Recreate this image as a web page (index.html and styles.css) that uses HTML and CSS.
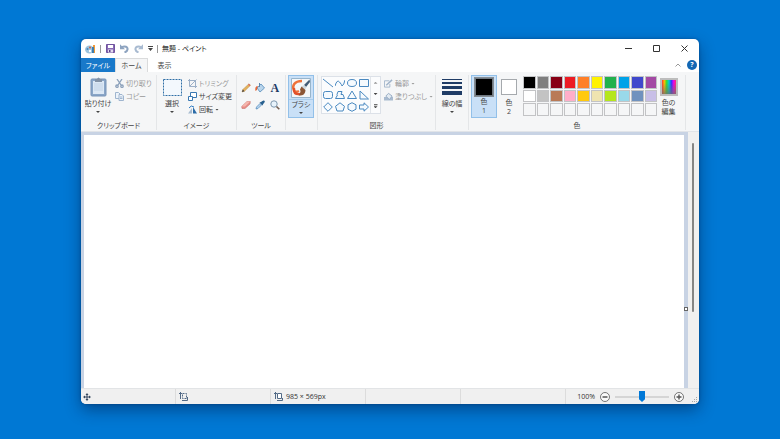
FILE: index.html
```html
<!DOCTYPE html>
<html lang="ja">
<head>
<meta charset="utf-8">
<title>無題 - ペイント</title>
<link rel="stylesheet" href="styles.css">
</head>
<body>
<main class="window">
  <header class="titlebar">
    <svg class="app-icon" width="11" height="10" viewBox="0 0 11 10"><ellipse cx="4.500" cy="5.500" rx="4.500" ry="4" fill="#9cc3de"/><circle cx="2.500" cy="5" r="1" fill="#4a86b8"/><circle cx="5" cy="3.500" r="1" fill="#d8613c"/><circle cx="5" cy="7" r="1.200" fill="#fff"/><path d="M8 1h2v8H8z" fill="#f29a38"/><path d="M7 3h2v6H7z" fill="#3f7dad"/></svg>
    <i class="bar"></i>
    <button class="tool" aria-label="上書き保存"><svg width="9" height="9" viewBox="0 0 9 9"><path d="M.5.500h8v8h-8z" fill="#8a6bb5" stroke="#70539f"/><path d="M2 1h5v3H2z" fill="#fff"/><path d="M2 5.500h5v3H2z" fill="#e3dbef"/><path d="M3 6h1.500v2H3z" fill="#5d438a"/></svg></button>
    <button class="tool" aria-label="元に戻す"><svg width="9" height="9" viewBox="0 0 9 9" fill="none" stroke="#8ea4c0" stroke-width="2"><path d="M1.500 3.300C5 1.500 8 3 7.500 5.500 7.200 7 6 8 4.500 8.500"/><path d="M0 .3v5h5z" fill="#8ea4c0" stroke="none"/></svg></button>
    <button class="tool" aria-label="やり直し"><svg width="9" height="9" viewBox="0 0 9 9" fill="none" stroke="#a9bbd1" stroke-width="2"><path d="M7.500 3.300C4 1.500 1 3 1.500 5.500 1.800 7 3 8 4.500 8.500"/><path d="M9 .3v5H4z" fill="#a9bbd1" stroke="none"/></svg></button>
    <button class="tool narrow" aria-label="カスタマイズ"><svg width="5" height="5" viewBox="0 0 5 5"><path d="M0 0h5v1H0zM0 2h5L2.500 5z" fill="#444"/></svg></button>
    <i class="bar"></i>
    <h1>無題 - ペイント</h1>
    <div class="caption">
      <button aria-label="最小化"><svg width="7" height="7" viewBox="0 0 7 7"><path d="M0 3.500h7" stroke="#333"/></svg></button>
      <button aria-label="最大化"><svg width="7" height="7" viewBox="0 0 7 7"><path d="M.5.500h6v6h-6z" fill="none" stroke="#333"/></svg></button>
      <button aria-label="閉じる"><svg width="7" height="7" viewBox="0 0 7 7"><path d="M.5.500l6 6M6.500.500l-6 6" stroke="#333"/></svg></button>
    </div>
  </header>

  <nav class="tabs">
    <button class="tab file">ファイル</button>
    <button class="tab active">ホーム</button>
    <button class="tab">表示</button>
    <button class="collapse" aria-label="リボンを折りたたむ"><svg width="6" height="4" viewBox="0 0 6 4"><path d="M.5 3.500L3 1l2.500 2.500" fill="none" stroke="#999"/></svg></button>
    <button class="help" aria-label="ヘルプ">?</button>
  </nav>

  <section class="ribbon">
    <section class="group clipboard">
      <div class="content">
        <button class="big"><span class="pic"><svg width="17" height="20" viewBox="0 0 17 20"><rect x="1" y="2" width="15" height="17" rx="1" fill="#8aa6c8" stroke="#7894b8"/><path d="M3 4h11v13H3z" fill="#dce8f5"/><path d="M4 7h9M4 9h9M4 11h9M4 13h9" stroke="#c2d3e7"/><path d="M5 2h2q1.500-3 3 0h2v3H5z" fill="#8392a6"/></svg></span><span>貼り付け</span><i class="arrow"></i></button>
        <div class="stack">
          <button class="item off"><svg width="9" height="9" viewBox="0 0 9 9" fill="none" stroke="#8ba0ba" stroke-width="1.300"><path d="M2 0l4 6M7 0L3 6"/><circle cx="2" cy="7.200" r="1.200"/><circle cx="7" cy="7.200" r="1.200"/></svg>切り取り</button>
          <button class="item off"><svg width="9" height="9" viewBox="0 0 9 9" fill="#edf3fa" stroke="#9fb5cf"><path d="M.5.500h3l1.500 1.500v4.500H.5z"/><path d="M4 2.500h3L8.500 4v4.500H4zM5 5h2.500M5 6.500h2.500"/></svg>コピー</button>
        </div>
      </div>
      <h2>クリップボード</h2>
    </section>

    <section class="group image">
      <div class="content">
        <button class="big select"><span class="pic"><svg width="19" height="17" viewBox="0 0 19 17"><path d="M.5.500h18v16H.5z" fill="#f3f8fd" stroke="#2f6ea6" stroke-dasharray="2 1"/></svg></span><span>選択</span><i class="arrow"></i></button>
        <div class="stack">
          <button class="item off"><svg width="9" height="9" viewBox="0 0 9 9" fill="none" stroke="#9cb0c8"><path d="M1.500 0v7.500H9M0 1.500h7.500V9M2 7L8.500.500"/></svg>トリミング</button>
          <button class="item"><svg width="9" height="9" viewBox="0 0 9 9" fill="#fff" stroke="#3978b2"><path d="M2.500.500h6v5h-6z"/><path d="M.5 4.500h4v4h-4z"/></svg>サイズ変更</button>
          <button class="item"><svg width="9" height="9" viewBox="0 0 9 9"><path d="M4 8.500H0L4 3z" fill="#a9bdd1"/><path d="M5 2l4 6.500H5z" fill="#2b6ca8"/><path d="M1 3q2-3.500 5-1" fill="none" stroke="#2b78c2"/></svg>回転<i class="arrow"></i></button>
        </div>
      </div>
      <h2>イメージ</h2>
    </section>

    <section class="group tools">
      <div class="content">
        <div class="tool-grid">
          <button aria-label="鉛筆"><svg width="10" height="10" viewBox="0 0 10 10"><path d="M1 9l.8-2.500L8 .8 9.500 2.300 3.500 8.200z" fill="#e5b25c" stroke="#b98f50" stroke-width=".5"/><path d="M1 9l.8-2.500 1.700 1.700z" fill="#444"/><path d="M7 1.600L8 .7l1.500 1.500-1 1z" fill="#d97163"/></svg></button>
          <button aria-label="塗りつぶし"><svg width="10" height="10" viewBox="0 0 10 10"><path d="M2 5L6 1l3.500 4L5 9z" fill="#b9d5ec" stroke="#6d9cc4"/><path d="M3 3Q-.5 3 .5 8q2-1 2-4z" fill="#e76737"/><path d="M4.500 0v4" stroke="#5d88ad"/></svg></button>
          <button class="letter" aria-label="テキスト">A</button>
          <button aria-label="消しゴム"><svg width="10" height="10" viewBox="0 0 10 10"><path d="M.7 6.500L6 1.500h3.300L9 4 4 8.500H1z" fill="#e88c87" stroke="#c9756f" stroke-width=".6"/><path d="M.7 6.500L6 1.500h3.300L4 6.500z" fill="#f5b6ad"/></svg></button>
          <button aria-label="色の選択"><svg width="10" height="10" viewBox="0 0 10 10"><path d="M1 9l.5-2L5 3.500l1.500 1.500L3 8.500z" fill="#b6d4ee" stroke="#4d86ba" stroke-width=".7"/><path d="M4.500 2.500l3 3 .7-1.500Q11 1.500 9 .5 8 0 6 2z" fill="#28608f"/></svg></button>
          <button aria-label="拡大鏡"><svg width="10" height="10" viewBox="0 0 10 10"><circle cx="4" cy="4" r="3.200" fill="#e8f3fb" stroke="#7e98ad"/><path d="M6.500 6.500L9.300 9.300" stroke="#735e51" stroke-width="1.600"/></svg></button>
        </div>
      </div>
      <h2>ツール</h2>
    </section>

    <section class="group brush">
      <button class="big chosen"><span class="pic"><svg width="20" height="20" viewBox="0 0 20 20"><path d="M.5.500h19v19H.5z" fill="#f4f7f9" stroke="#98b5cc"/><path d="M11 3C3 3 1 8 3 12q1 3 5 1" fill="none" stroke="#ee713a" stroke-width="2.500"/><path d="M3 10q-1 7 6 6 3-.5 4-3" fill="none" stroke="#e2502a" stroke-width="2.500"/><path d="M18.500 1.500L13 7l2 2 4-5z" fill="#425c76"/><path d="M13 7l2.500 2.500-1.500 2-3.500-3z" fill="#cfd8df"/><path d="M10.500 8.500l4 3.500q0 6-7 5.500 3-3 1.500-6z" fill="#8b5636"/></svg></span><span class="split">ブラシ</span><i class="arrow"></i></button>
    </section>

    <section class="group shapes">
      <div class="content">
        <div class="gallery">
          <div class="shape-grid">
            <svg viewBox="0 0 10 10"><path d="M0 1l10 8"/></svg>
            <svg viewBox="0 0 10 10"><path d="M0 8Q2 1 4.500 4T7 8Q9 7 10 2"/></svg>
            <svg viewBox="0 0 10 10"><ellipse cx="5" cy="5" rx="4.500" ry="3.500"/></svg>
            <svg viewBox="0 0 10 10"><path d="M.5 1.500h9v7h-9z"/></svg>
            <svg viewBox="0 0 10 10"><rect x=".5" y="1.500" width="9" height="7" rx="2"/></svg>
            <svg viewBox="0 0 10 10"><path d="M.5 8.500l2-3.500-.5-.5 1-3h4L6 4.500h2l1.500 4z"/></svg>
            <svg viewBox="0 0 10 10"><path d="M5 1l4.500 7.500h-9z"/></svg>
            <svg viewBox="0 0 10 10"><path d="M1 1v8h8.500z"/></svg>
            <svg viewBox="0 0 10 10"><path d="M5 .7L9.300 5 5 9.300.7 5z"/></svg>
            <svg viewBox="0 0 10 10"><path d="M5 .8l4.500 3.500L8 9H2L.5 4.300z"/></svg>
            <svg viewBox="0 0 10 10"><path d="M5 .7l4 2.100v4.400L5 9.300 1 7.200V2.800z"/></svg>
            <svg viewBox="0 0 10 10"><path d="M.5 3H5V.8L9.500 5 5 9.200V7H.5z"/></svg>
          </div>
          <div class="gallery-scroll">
            <button class="off" aria-label="上へ"><i class="arrow up"></i></button>
            <button aria-label="下へ"><i class="arrow"></i></button>
            <button aria-label="その他"><i class="arrow lined"></i></button>
          </div>
        </div>
        <div class="stack">
          <button class="item off"><svg width="9" height="9" viewBox="0 0 10 9" fill="none" stroke="#9fb3ca"><path d="M6 1.500H.5v7h6V5"/><path d="M2.500 6.500L9 .5" stroke-width="1.600"/></svg>輪郭<i class="arrow"></i></button>
          <button class="item off"><svg width="9" height="9" viewBox="0 0 10 9"><path d="M0 5h10v4H0z" fill="#a9bbd0"/><path d="M2 4l3-3 4 3-3 4z" fill="#e2eaf2" stroke="#90a6bf"/></svg>塗りつぶし<i class="arrow"></i></button>
        </div>
      </div>
      <h2>図形</h2>
    </section>

    <section class="group width">
      <button class="big"><span class="pic"><svg width="20" height="18" viewBox="0 0 20 18" fill="#1f3c66"><path d="M0 1h20v1H0zM0 4h20v2H0zM0 8h20v3H0zM0 13h20v4H0z"/></svg></span><span>線の幅</span><i class="arrow"></i></button>
    </section>

    <section class="group colors">
      <div class="content">
        <button class="big chosen"><span class="pic"><i class="swatch black"></i></span><span>色</span><span>1</span></button>
        <button class="big second"><span class="pic"><i class="swatch white"></i></span><span>色</span><span>2</span></button>
        <div class="palette">
          <button class="c-black" aria-label="黒"></button><button class="c-gray" aria-label="50% 灰色"></button><button class="c-maroon" aria-label="濃い赤"></button><button class="c-red" aria-label="赤"></button><button class="c-orange" aria-label="オレンジ"></button><button class="c-yellow" aria-label="黄"></button><button class="c-green" aria-label="緑"></button><button class="c-cyan" aria-label="青緑"></button><button class="c-indigo" aria-label="藍色"></button><button class="c-purple" aria-label="紫"></button>
          <button class="c-white" aria-label="白"></button><button class="c-silver" aria-label="25% 灰色"></button><button class="c-brown" aria-label="茶"></button><button class="c-pink" aria-label="ローズ"></button><button class="c-gold" aria-label="金"></button><button class="c-cream" aria-label="薄い黄"></button><button class="c-lime" aria-label="ライム"></button><button class="c-sky" aria-label="薄い青緑"></button><button class="c-slate" aria-label="青灰色"></button><button class="c-lavender" aria-label="ラベンダー"></button>
          <button aria-label="空き 1"></button><button aria-label="空き 2"></button><button aria-label="空き 3"></button><button aria-label="空き 4"></button><button aria-label="空き 5"></button><button aria-label="空き 6"></button><button aria-label="空き 7"></button><button aria-label="空き 8"></button><button aria-label="空き 9"></button><button aria-label="空き 10"></button>
        </div>
        <button class="big edit"><span class="pic"><i class="spectrum"></i></span><span>色の</span><span>編集</span></button>
      </div>
      <h2>色</h2>
    </section>
  </section>

  <section class="workspace">
    <div class="page"></div>
    <div class="gutter"><i class="handle"></i></div>
    <div class="scrollbar"><i class="thumb"></i></div>
  </section>

  <footer class="status">
    <div><svg width="8" height="8" viewBox="0 0 8 8"><path d="M4 0l1.500 2h-3zM4 8L2.500 6h3zM0 4l2-1.500v3zM8 4L6 2.500v3z" fill="#34475f"/><path d="M4 1v6M1 4h6" stroke="#34475f"/></svg></div>
    <div><svg width="9" height="9" viewBox="0 0 9 9" fill="none" stroke="#526a86"><path d="M0 1.500h3M1.500 0v7"/><path d="M3.500 1.500h4v5h-4z" stroke-dasharray="2 1"/><path d="M3 8.500h5.500V5"/></svg></div>
    <div><svg width="9" height="9" viewBox="0 0 9 9" fill="none" stroke="#526a86"><path d="M0 1.500h3M1.500 0v7"/><path d="M3.500 1.500h4v5h-4z" fill="#fff"/><path d="M3 8.500h5.500V6"/></svg><span>985 × 569px</span></div>
    <div></div>
    <div></div>
    <div class="zoom">
      <label for="zoom">100%</label>
      <button aria-label="縮小"><svg width="10" height="10" viewBox="0 0 10 10" fill="#fafafa" stroke="#555"><circle cx="5" cy="5" r="4.500" stroke-width=".8"/><path d="M2.500 5h5" stroke-width="1.400"/></svg></button>
      <input id="zoom" type="range" min="0" max="100" value="50">
      <button aria-label="拡大"><svg width="10" height="10" viewBox="0 0 10 10" fill="#fafafa" stroke="#555"><circle cx="5" cy="5" r="4.500" stroke-width=".8"/><path d="M2.500 5h5M5 2.500v5" stroke-width="1.400"/></svg></button>
    </div>
    <svg class="grip" width="6" height="6" viewBox="0 0 6 6" fill="#aaa"><path d="M4 0h1v1H4zM4 2h1v1H4zM2 2h1v1H2zM4 4h1v1H4zM2 4h1v1H2zM0 4h1v1H0z"/></svg>
  </footer>
</main>
</body>
</html>
```
FILE: styles.css
```css
* { box-sizing: border-box; }

body {
  margin: 0;
  min-height: 100vh;
  padding: 39px 81px 35px;
  display: flex;
  background: #0078d4;
  color: #444;
  font: 7px/9px "Open Sans", "Noto Sans CJK JP", sans-serif;
  font-feature-settings: "palt";
}

button {
  margin: 0;
  padding: 0;
  border: 0;
  background: none;
  color: inherit;
  font: inherit;
  font-feature-settings: inherit;
  white-space: nowrap;
}

svg { display: block; flex: none; }

h1, h2 { margin: 0; font: inherit; }

.window {
  flex: 1;
  min-width: 0;
  display: flex;
  flex-direction: column;
  overflow: hidden;
  border-radius: 5px;
  background: #fff;
  box-shadow: 0 6px 16px rgba(0, 20, 60, .45), 0 0 3px rgba(0, 20, 60, .35);
}

/* Title bar */
.titlebar {
  height: 19px;
  padding-left: 4px;
  display: flex;
  align-items: center;
  color: #222;
}
.bar { width: 1px; height: 8px; background: #999; }
.app-icon { margin-right: 4px; }
.tool { width: 9px; margin-left: 5px; }
.narrow { width: 5px; margin-right: 4px; }
.titlebar h1 { margin-left: 4px; }
.caption { margin-left: auto; padding-right: 1px; display: flex; }
.caption button {
  width: 28px;
  height: 18px;
  display: grid;
  place-items: center;
}

/* Tabs */
.tabs { height: 14px; display: flex; align-items: stretch; }
.tab { width: 33px; line-height: 13px; }
.file { width: 34px; background: #1979ca; color: #fff; }
.active {
  background: #f5f6f7;
  border: 1px solid #dadbdc;
  border-bottom: 0;
}
.collapse { margin-left: auto; }
.help {
  width: 10px;
  height: 10px;
  margin: 2px 2px 0 6px;
  border-radius: 50%;
  background: #1267b4;
  color: #fff;
  font-weight: 700;
  line-height: 10px;
}

/* Ribbon */
.ribbon {
  height: 60px;
  padding-top: 3px;
  display: flex;
  background: #f5f6f7;
  border-bottom: 1px solid #e1e4e8;
}
.group {
  height: 55px;
  flex: none;
  display: flex;
  flex-direction: column;
  border-right: 1px solid #e4e6e8;
}
.group h2 { margin-top: auto; text-align: center; }
.content { display: flex; height: 43px; }
.clipboard { width: 76px; }
.image { width: 80px; }
.tools { width: 49px; }
.brush { width: 32px; padding-left: 2px; }
.shapes { width: 118px; }
.width { width: 33px; align-items: center; }
.colors { width: 217px; }

.big {
  width: 26px;
  height: 43px;
  padding-bottom: 2px;
  flex: none;
  display: flex;
  flex-direction: column;
  align-items: center;
}
.pic { height: 24px; display: grid; place-items: center; }
.clipboard .big { margin-left: 4px; }
.chosen { background: #c9e0f7; border: 1px solid #92c0e9; }
.chosen .pic { height: 23px; }
.split { align-self: stretch; border-top: 1px solid #a9cdec; }

.arrow {
  width: 4px;
  height: 2px;
  margin-top: 3px;
  background: currentColor;
  clip-path: polygon(0 0, 100% 0, 50% 100%);
}
.arrow.up { clip-path: polygon(50% 0, 100% 100%, 0 100%); }

.stack { padding-top: 2px; }
.clipboard .stack { padding-left: 4px; }
.image .stack { padding-left: 2px; }
.image .select { width: 28px; margin-left: 1px; }
.shapes .stack { padding-left: 3px; }
.item {
  height: 13px;
  display: flex;
  align-items: center;
  gap: 2px;
  line-height: 9px;
}
.item .arrow { margin: 0; }
.off { color: #999; }

.tool-grid {
  width: 43px;
  height: 34px;
  margin: 4px 2px;
  display: grid;
  grid-template-columns: repeat(3, 1fr);
}
.tool-grid button { display: grid; place-items: center; }
.letter { color: #1f3c66; font: 700 12px/12px "Liberation Serif", serif; }

.gallery {
  width: 60px;
  height: 38px;
  margin: 1px 0 0 3px;
  display: flex;
  border: 1px solid #dce1e8;
  background: #fbfcfd;
}
.shape-grid {
  flex: 1;
  display: grid;
  grid-template-columns: repeat(4, 1fr);
  place-items: center;
  border-right: 1px solid #e1e5ea;
}
.shape-grid svg { width: 10px; height: 10px; fill: #f5fafe; stroke: #4a89c0; }
.gallery-scroll { width: 9px; display: grid; }
.gallery-scroll button { display: grid; place-items: center; }
.gallery-scroll .arrow { margin: 0; }
.gallery-scroll .lined {
  height: 4px;
  clip-path: polygon(0 0, 100% 0, 100% 25%, 0 25%, 0 50%, 100% 50%, 50% 100%, 0 50%);
}

/* Colours */
.colors .chosen { margin-left: 2px; }
.second { width: 24px; }
.swatch { border: 1px solid #858d94; }
.black { width: 20px; height: 20px; background: #000; box-shadow: inset 0 0 0 1px #707880; }
.white { width: 16px; height: 16px; background: #fff; border-color: #a5a9ad; }
.palette {
  width: 134px;
  height: 40px;
  flex: none;
  margin: 1px 0 0 2px;
  display: grid;
  grid-template-columns: repeat(10, 1fr);
  gap: 1px;
}
.palette button {
  border: 1px solid #c2c3c5;
  background-color: #f5f6f7;
}
.edit { width: 23px; }
.spectrum {
  width: 18px;
  height: 18px;
  border: 2px solid #bdbdbd;
  background:
    linear-gradient(transparent 20%, rgba(110, 110, 110, .75)),
    linear-gradient(90deg, #f33, #fb0, #3d3, #0cd, #33f, #e0e, #f36);
}
.palette .c-black { background-color: #000; }
.palette .c-gray { background-color: #7f7f7f; }
.palette .c-maroon { background-color: #880015; }
.palette .c-red { background-color: #ed1c24; }
.palette .c-orange { background-color: #ff7f27; }
.palette .c-yellow { background-color: #fff200; }
.palette .c-green { background-color: #22b14c; }
.palette .c-cyan { background-color: #00a2e8; }
.palette .c-indigo { background-color: #3f48cc; }
.palette .c-purple { background-color: #a349a4; }
.palette .c-white { background-color: #fff; }
.palette .c-silver { background-color: #c3c3c3; }
.palette .c-brown { background-color: #b97a57; }
.palette .c-pink { background-color: #ffaec9; }
.palette .c-gold { background-color: #ffc90e; }
.palette .c-cream { background-color: #efe4b0; }
.palette .c-lime { background-color: #b5e61d; }
.palette .c-sky { background-color: #99d9ea; }
.palette .c-slate { background-color: #7092be; }
.palette .c-lavender { background-color: #c8bfe7; }

/* Drawing area */
.workspace {
  flex: 1;
  padding-left: 3px;
  display: flex;
  background: #c8d3e4;
}
.page { flex: 1; margin-top: 3px; background: #fff; }
.gutter { width: 4px; display: flex; align-items: center; }
.handle {
  width: 4px;
  height: 4px;
  margin-top: 98px;
  border: 1px solid #666;
  background: #fff;
}
.scrollbar { width: 11px; padding: 11px 4px 76px; display: flex; background: #f0f0f0; }
.thumb { width: 2px; background: #858585; border-radius: 1px; }

/* Status bar */
.status {
  position: relative;
  height: 16px;
  display: grid;
  grid-template-columns: 95fr 95fr 95fr 95fr 105fr 133fr;
  background: #f0f0f0;
  border-top: 1px solid #e2e4e6;
  color: #333;
}
.status > div {
  padding-left: 3px;
  display: flex;
  align-items: center;
  gap: 3px;
  border-right: 1px solid #dcdcdc;
}
.status > div:first-child { padding-left: 2px; }
.status > .zoom {
  padding: 0 15px 0 0;
  justify-content: flex-end;
  gap: 5px;
  border: 0;
}
.zoom input {
  appearance: none;
  width: 54px;
  height: 12px;
  margin: 0;
  background: linear-gradient(#d5d5d5, #d5d5d5) center / 100% 2px no-repeat;
}
.zoom input::-webkit-slider-thumb {
  appearance: none;
  width: 6px;
  height: 11px;
  background: #0078d7;
  clip-path: polygon(0 0, 100% 0, 100% 75%, 50% 100%, 0 75%);
}
.grip { position: absolute; right: 1px; bottom: 1px; }
```
